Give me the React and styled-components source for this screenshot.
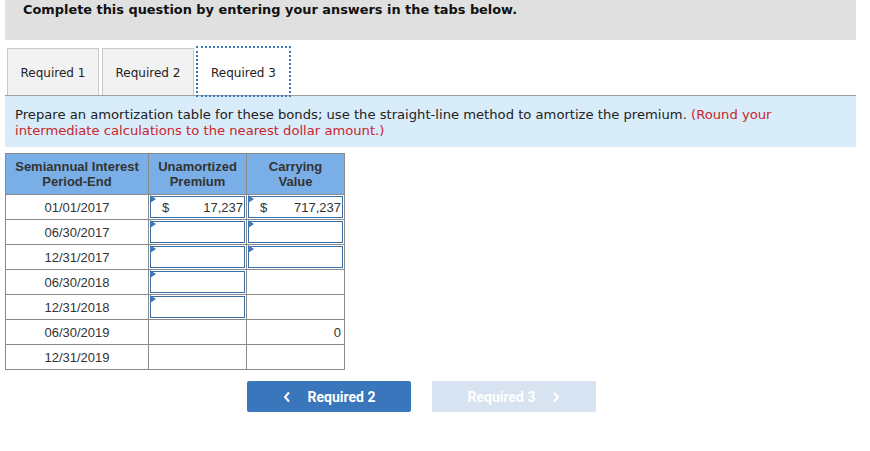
import React from "react";
import styled, { createGlobalStyle } from "styled-components";

const Global = createGlobalStyle`
  html, body { margin: 0; padding: 0; background: #fff; }
  body { font-family: "DejaVu Sans", Verdana, sans-serif; }
`;

const Page = styled.div`
  width: 851px;
  margin-left: 5px;
  display: flex;
  flex-direction: column;
  align-items: flex-start;
`;

const Banner = styled.div`
  align-self: stretch;
  height: 40px;
  background: #e0e0e0;
  padding: 2px 0 0 18px;
  box-sizing: border-box;
  font-size: 12.9px;
  font-weight: bold;
  color: #111;
`;

const TabBar = styled.div`
  display: flex;
  gap: 3px;
  padding: 8px 0 0 2px;
  align-items: flex-end;
`;

const Tab = styled.div`
  width: ${p => (p.$active ? 91 : 92)}px;
  height: 47px;
  box-sizing: border-box;
  display: flex;
  align-items: center;
  justify-content: center;
  padding-top: 2px;
  font-size: 12px;
  color: #222;
  background: ${p => (p.$active ? "#fff" : "#f2f2f2")};
  border: 1px solid ${p => (p.$active ? "#fff" : "#c8c8c8")};
  border-bottom: none;
  outline: ${p => (p.$active ? "2px dotted #3a77bb" : "none")};
  outline-offset: 0px;
  position: relative;
  z-index: ${p => (p.$active ? 1 : 0)};
  margin-left: ${p => (p.$active ? "1px" : "0")};
`;

const Prompt = styled.div`
  align-self: stretch;
  background: #d9ecfa;
  border-top: 1px solid #a0a0a0;
  padding: 11px 10px 8px 10px;
  font-size: 13.15px;
  line-height: 16px;
  color: #222;
`;

const Red = styled.span`
  color: #c8262a;
`;

const Grid = styled.table`
  border-collapse: collapse;
  margin-top: 6px;
  font-family: "Liberation Sans", Arial, sans-serif;
  font-size: 13px;
  color: #333;
  table-layout: fixed;
`;

const Th = styled.th`
  background: #79aee6;
  border: 1px solid #8a8a8a;
  height: 40px;
  padding: 0;
  font-weight: bold;
  font-size: 13px;
  line-height: 15px;
  color: #333;
  vertical-align: middle;
`;

const Td = styled.td`
  border: 1px solid #8a8a8a;
  height: 24px;
  padding: 0;
  text-align: ${p => (p.$right ? "right" : "center")};
  padding-right: ${p => (p.$right ? "3px" : "0")};
  font-size: 13px;
`;

const InputCell = styled.td`
  border: 1px solid #8a8a8a;
  height: 24px;
  padding: 1px;
  box-sizing: border-box;
`;

const Field = styled.div`
  position: relative;
  height: 22px;
  box-sizing: border-box;
  border: 1px solid #3e6ea6;
  background: #fff;
  display: flex;
  align-items: center;
  justify-content: space-between;
  padding: 0 1px 0 11px;
  font-size: 13px;
  color: #333;
`;

const Marker = styled.span`
  position: absolute;
  left: 0;
  top: 0;
  width: 0;
  height: 0;
  border-top: 4px solid transparent;
  border-bottom: 4px solid transparent;
  border-left: 6px solid #3a77bb;
  transform: translate(-1px, -2px);
`;

const Buttons = styled.div`
  display: flex;
  gap: 21px;
  margin: 11px 0 0 242px;
`;

const NavButton = styled.button`
  width: 164px;
  height: 31px;
  border: none;
  border-radius: 2px;
  background: ${p => (p.$disabled ? "#d7e3f1" : "#3a76bb")};
  color: #fff;
  font-family: Roboto, "Liberation Sans", sans-serif;
  font-weight: bold;
  font-size: 14px;
  display: flex;
  align-items: center;
  justify-content: center;
  gap: 17px;
  padding: 0;
`;

const Chevron = ({ dir }) => (
  <svg width="8" height="12" viewBox="0 0 8 12">
    <path
      d={dir === "left" ? "M6 1.5 L2 6 L6 10.5" : "M2 1.5 L6 6 L2 10.5"}
      fill="none"
      stroke="#fff"
      strokeWidth="2"
    />
  </svg>
);

const rows = [
  { date: "01/01/2017", p: { dollar: "$", v: "17,237" }, c: { dollar: "$", v: "717,237" } },
  { date: "06/30/2017", p: {}, c: {} },
  { date: "12/31/2017", p: {}, c: {} },
  { date: "06/30/2018", p: {} },
  { date: "12/31/2018", p: {} },
  { date: "06/30/2019", cText: "0" },
  { date: "12/31/2019" },
];

const InputBox = ({ data }) => (
  <InputCell>
    <Field>
      <Marker />
      <span>{data.dollar || ""}</span>
      <span>{data.v || ""}</span>
    </Field>
  </InputCell>
);

export default function App() {
  return (
    <>
      <Global />
      <Page>
        <Banner>Complete this question by entering your answers in the tabs below.</Banner>
        <TabBar>
          <Tab>Required 1</Tab>
          <Tab>Required 2</Tab>
          <Tab $active>Required 3</Tab>
        </TabBar>
        <Prompt>
          Prepare an amortization table for these bonds; use the straight-line method to amortize the premium.{" "}
          <Red>(Round your intermediate calculations to the nearest dollar amount.)</Red>
        </Prompt>
        <Grid>
          <colgroup>
            <col style={{ width: 143 }} />
            <col style={{ width: 98 }} />
            <col style={{ width: 98 }} />
          </colgroup>
          <thead>
            <tr>
              <Th>Semiannual Interest<br />Period-End</Th>
              <Th>Unamortized<br />Premium</Th>
              <Th>Carrying<br />Value</Th>
            </tr>
          </thead>
          <tbody>
            {rows.map(r => (
              <tr key={r.date}>
                <Td>{r.date}</Td>
                {r.p ? <InputBox data={r.p} /> : <Td />}
                {r.c ? <InputBox data={r.c} /> : <Td $right>{r.cText || ""}</Td>}
              </tr>
            ))}
          </tbody>
        </Grid>
        <Buttons>
          <NavButton>
            <Chevron dir="left" />
            Required 2
          </NavButton>
          <NavButton $disabled>
            Required 3
            <Chevron dir="right" />
          </NavButton>
        </Buttons>
      </Page>
    </>
  );
}
